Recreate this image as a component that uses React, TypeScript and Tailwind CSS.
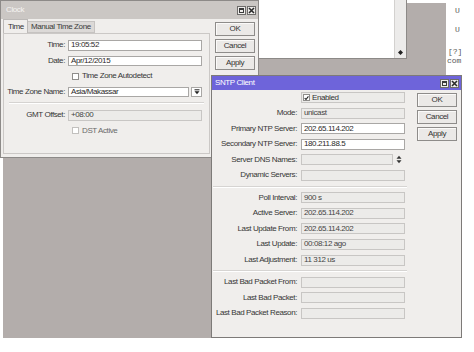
import React from "react";

const FONT = "font-['Liberation_Sans',Arial,sans-serif]";

function TitleButtons() {
  return (
    <div className="flex gap-[1px]">
      <div className="w-[9px] h-[9px] bg-[#eeecea] border border-[#6e6c6a] flex items-center justify-center">
        <div className="w-[5px] h-[5px] border border-[#3a3a3a] border-t-2" />
      </div>
      <div className="w-[9px] h-[9px] bg-[#eeecea] border border-[#6e6c6a] flex items-center justify-center">
        <svg width="7" height="7" viewBox="0 0 7 7">
          <path d="M1 1L6 6M6 1L1 6" stroke="#2a2a2a" strokeWidth="1.6" />
        </svg>
      </div>
    </div>
  );
}

function Btn({ label }: { label: string }) {
  return (
    <div className="h-[14px] w-[40px] bg-[#ebe9e7] border border-[#8e8c8a] shadow-[inset_1px_1px_0_#fbfaf9] flex items-center justify-center text-[#333]">
      {label}
    </div>
  );
}

function Check({ checked, disabled }: { checked?: boolean; disabled?: boolean }) {
  return (
    <div
      className={
        "w-[7px] h-[7px] border bg-white flex items-center justify-center " +
        (disabled ? "border-[#c2c0be]" : "border-[#8f8d8b]")
      }
    >
      {checked && (
        <svg width="6" height="6" viewBox="0 0 6 6">
          <path d="M0.8 3.2L2.4 4.8L5.3 1" stroke="#222" strokeWidth="1.3" fill="none" />
        </svg>
      )}
    </div>
  );
}

function Field({ value, ro }: { value?: string; ro?: boolean }) {
  return (
    <div
      className={
        "h-full flex-1 flex items-center px-[2px] border " +
        (ro ? "bg-[#ecebe9] border-[#c8c6c4] text-[#444]" : "bg-white border-[#a9a7a5] text-[#2a2a2a]")
      }
    >
      {value}
    </div>
  );
}

function ClockRow({ label, children }: { label: string; children: React.ReactNode }) {
  return (
    <div className="h-[10.5px] flex items-center">
      <div className="w-[61px] text-right text-[#363636]">{label}</div>
      <div className="ml-[3px] w-[134px] h-full flex gap-[2px]">{children}</div>
    </div>
  );
}

function ClockWindow() {
  return (
    <div className="absolute left-0 top-0 w-[259px] h-[158px] bg-[#f0eeec] border border-[#8d8a88] flex flex-col">
      <div className="h-[18px] bg-[#cbc7c4] flex items-center justify-between pl-[5px] pr-[2px]">
        <span className="text-[#f6f4f2]">Clock</span>
        <TitleButtons />
      </div>
      <div className="flex">
        <div className="ml-[2px] w-[207px] flex flex-col">
          <div className="flex items-end h-[14px]">
            <div className="h-[14px] pl-[4px] pr-[3px] flex items-center bg-[#f0eeec] border border-b-0 border-[#bdbab8] text-[#333]">
              Time
            </div>
            <div className="h-[12px] px-[3px] flex items-center bg-[#dcd9d7] border border-l-0 border-[#c6c3c1] text-[#3a3a3a]">
              Manual Time Zone
            </div>
          </div>
          <div className="h-[121px] border border-[#cbc8c6] pt-[6px] flex flex-col gap-[5px]">
            <ClockRow label="Time:">
              <Field value="19:05:52" />
            </ClockRow>
            <ClockRow label="Date:">
              <Field value="Apr/12/2015" />
            </ClockRow>
            <div className="h-[10.5px] flex items-center pl-[68px] gap-[3px] text-[#363636]">
              <Check />
              <span>Time Zone Autodetect</span>
            </div>
            <ClockRow label="Time Zone Name:">
              <Field value="Asia/Makassar" />
              <div className="w-[11px] h-full bg-white border border-[#a9a7a5] flex items-center justify-center">
                <svg width="6" height="6" viewBox="0 0 6 6">
                  <path d="M0.5 0.8H5.5" stroke="#222" strokeWidth="1" />
                  <path d="M0.5 2.2H5.5L3 5.2Z" fill="#222" />
                </svg>
              </div>
            </ClockRow>
            <div className="mx-[5px] h-[2px] border-t border-[#d5d3d1] border-b border-b-white" />
            <div className="mt-[1px]">
              <ClockRow label="GMT Offset:">
                <Field value="+08:00" ro />
              </ClockRow>
            </div>
            <div className="h-[10.5px] flex items-center pl-[68px] gap-[3px] text-[#6a6a6a]">
              <Check disabled />
              <span>DST Active</span>
            </div>
          </div>
        </div>
        <div className="ml-[5px] mt-[3px] flex flex-col gap-[3px]">
          <Btn label="OK" />
          <Btn label="Cancel" />
          <Btn label="Apply" />
        </div>
      </div>
    </div>
  );
}

function SRow({ label, children }: { label: string; children?: React.ReactNode }) {
  return (
    <div className="h-[11px] flex items-center">
      <div className="w-[84px] text-right text-[#363636] whitespace-nowrap">{label}</div>
      <div className="ml-[4px] w-[104px] h-full flex items-center">{children ?? <Field ro />}</div>
    </div>
  );
}

function Sep() {
  return <div className="h-[2px] border-t border-[#d6d4d2] border-b border-b-white" />;
}

function SntpWindow() {
  return (
    <div className="absolute left-[211px] top-[75px] w-[251px] h-[263px] bg-[#f0eeec] border border-[#7d7a78] flex flex-col">
      <div className="h-[14px] bg-[#6e64da] flex items-center justify-between pl-[3px] pr-[2px]">
        <span className="text-white">SNTP Client</span>
        <TitleButtons />
      </div>
      <div className="flex">
        <div className="pt-[2px] pl-[1px] w-[195px] flex flex-col gap-[4.6px]">
          <SRow label="">
            <div className="h-full flex-1 flex items-center gap-[2px] px-[1px] bg-[#ecebe9] border border-[#c8c6c4] text-[#333]">
              <Check checked />
              <span>Enabled</span>
            </div>
          </SRow>
          <SRow label="Mode:">
            <Field value="unicast" ro />
          </SRow>
          <SRow label="Primary NTP Server:">
            <Field value="202.65.114.202" />
          </SRow>
          <SRow label="Secondary NTP Server:">
            <Field value="180.211.88.5" />
          </SRow>
          <SRow label="Server DNS Names:">
            <div className="h-full w-[92px] bg-[#ecebe9] border border-[#c8c6c4]" />
            <div className="flex-1 flex justify-center">
              <svg width="6" height="9" viewBox="0 0 6 9">
                <path d="M0.5 3.8H5.5L3 0.8Z" fill="#333" />
                <path d="M0.5 5.2H5.5L3 8.2Z" fill="#333" />
              </svg>
            </div>
          </SRow>
          <SRow label="Dynamic Servers:" />
          <Sep />
          <SRow label="Poll Interval:">
            <Field value="900 s" ro />
          </SRow>
          <SRow label="Active Server:">
            <Field value="202.65.114.202" ro />
          </SRow>
          <SRow label="Last Update From:">
            <Field value="202.65.114.202" ro />
          </SRow>
          <SRow label="Last Update:">
            <Field value="00:08:12 ago" ro />
          </SRow>
          <SRow label="Last Adjustment:">
            <Field value="11 312 us" ro />
          </SRow>
          <Sep />
          <SRow label="Last Bad Packet From:" />
          <SRow label="Last Bad Packet:" />
          <SRow label="Last Bad Packet Reason:" />
        </div>
        <div className="ml-[10px] mt-[3px] flex flex-col gap-[3px]">
          <Btn label="OK" />
          <Btn label="Cancel" />
          <Btn label="Apply" />
        </div>
      </div>
    </div>
  );
}

export default function App() {
  return (
    <div className={"relative w-[474px] h-[352px] bg-white overflow-hidden text-[8px] leading-none tracking-[-0.4px] " + FONT}>
      {/* desktop area */}
      <div className="absolute left-[3px] top-[3px] w-[443px] h-[335px] bg-[#b3adab]" />

      {/* terminal text at the right */}
      <div className="absolute left-[446px] top-0 w-[28px] h-[80px] flex flex-col font-['Liberation_Mono',monospace] text-[8px] tracking-normal text-[#5a5a5a]">
        <span className="ml-[9px] mt-[7px]">U</span>
        <span className="ml-[9px] mt-[11px]">U</span>
        <span className="ml-[2px] mt-[14px]">[?]</span>
        <span className="ml-[1px] mt-[1px]">com</span>
      </div>

      {/* window behind */}
      <div className="absolute left-[230px] top-0 w-[177px] h-[59px] bg-white border-r border-b border-[#8c8987] flex justify-end">
        <div className="w-[12px] bg-[#ecebea] border-l border-[#d3d1cf] flex flex-col justify-end">
          <div className="h-[12px] flex items-center justify-center">
            <svg width="5" height="5" viewBox="0 0 5 5">
              <path d="M2.5 0L5 2.5L2.5 5L0 2.5Z" fill="#222" />
            </svg>
          </div>
        </div>
      </div>

      <ClockWindow />
      <SntpWindow />
    </div>
  );
}
